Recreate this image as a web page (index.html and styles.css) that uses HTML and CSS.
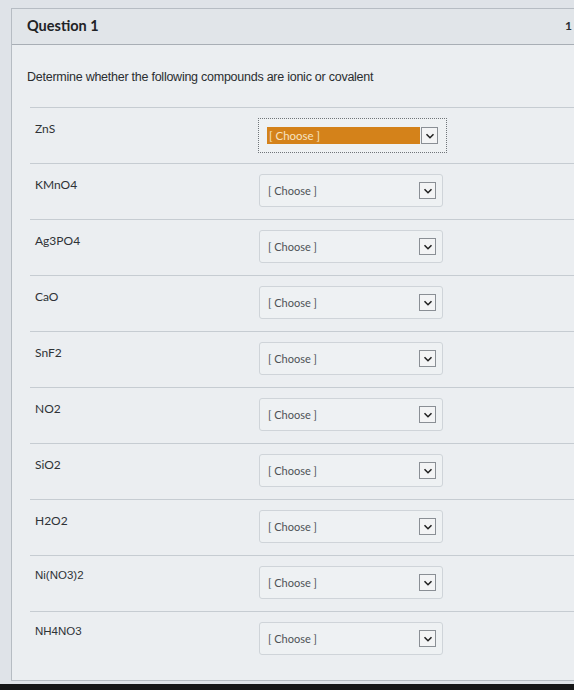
FILE: index.html
```html
<!DOCTYPE html>
<html>
<head>
<meta charset="utf-8">
<link rel="stylesheet" href="styles.css">
</head>
<body>
<div class="page">
  <div class="card">
    <div class="header">
      <span class="title">Question 1</span>
      <span class="pts">1</span>
    </div>
    <div class="content">
      <p class="prompt">Determine whether the following compounds are ionic or covalent</p>
      <div class="rows">
        <div class="row">
          <span class="label">ZnS</span>
          <div class="select focused">
            <span class="bar">[ Choose ]</span>
            <span class="chev"><svg viewBox="0 0 16 16" width="14" height="14"><path d="M4 6 L8 10 L12 6" fill="none" stroke="#222" stroke-width="1.8"/></svg></span>
          </div>
        </div>
        <div class="row">
          <span class="label">KMnO4</span>
          <div class="select"><span class="txt">[ Choose ]</span><span class="chev"><svg viewBox="0 0 16 16" width="14" height="14"><path d="M4 6 L8 10 L12 6" fill="none" stroke="#222" stroke-width="1.8"/></svg></span></div>
        </div>
        <div class="row">
          <span class="label">Ag3PO4</span>
          <div class="select"><span class="txt">[ Choose ]</span><span class="chev"><svg viewBox="0 0 16 16" width="14" height="14"><path d="M4 6 L8 10 L12 6" fill="none" stroke="#222" stroke-width="1.8"/></svg></span></div>
        </div>
        <div class="row">
          <span class="label">CaO</span>
          <div class="select"><span class="txt">[ Choose ]</span><span class="chev"><svg viewBox="0 0 16 16" width="14" height="14"><path d="M4 6 L8 10 L12 6" fill="none" stroke="#222" stroke-width="1.8"/></svg></span></div>
        </div>
        <div class="row">
          <span class="label">SnF2</span>
          <div class="select"><span class="txt">[ Choose ]</span><span class="chev"><svg viewBox="0 0 16 16" width="14" height="14"><path d="M4 6 L8 10 L12 6" fill="none" stroke="#222" stroke-width="1.8"/></svg></span></div>
        </div>
        <div class="row">
          <span class="label">NO2</span>
          <div class="select"><span class="txt">[ Choose ]</span><span class="chev"><svg viewBox="0 0 16 16" width="14" height="14"><path d="M4 6 L8 10 L12 6" fill="none" stroke="#222" stroke-width="1.8"/></svg></span></div>
        </div>
        <div class="row">
          <span class="label">SiO2</span>
          <div class="select"><span class="txt">[ Choose ]</span><span class="chev"><svg viewBox="0 0 16 16" width="14" height="14"><path d="M4 6 L8 10 L12 6" fill="none" stroke="#222" stroke-width="1.8"/></svg></span></div>
        </div>
        <div class="row">
          <span class="label">H2O2</span>
          <div class="select"><span class="txt">[ Choose ]</span><span class="chev"><svg viewBox="0 0 16 16" width="14" height="14"><path d="M4 6 L8 10 L12 6" fill="none" stroke="#222" stroke-width="1.8"/></svg></span></div>
        </div>
        <div class="row">
          <span class="label arial">Ni(NO3)2</span>
          <div class="select"><span class="txt">[ Choose ]</span><span class="chev"><svg viewBox="0 0 16 16" width="14" height="14"><path d="M4 6 L8 10 L12 6" fill="none" stroke="#222" stroke-width="1.8"/></svg></span></div>
        </div>
        <div class="row">
          <span class="label arial">NH4NO3</span>
          <div class="select"><span class="txt">[ Choose ]</span><span class="chev"><svg viewBox="0 0 16 16" width="14" height="14"><path d="M4 6 L8 10 L12 6" fill="none" stroke="#222" stroke-width="1.8"/></svg></span></div>
        </div>
      </div>
    </div>
  </div>
  <div class="bezel"></div>
</div>
</body>
</html>
```
FILE: styles.css
```css
html, body {
  margin: 0;
  padding: 0;
}
body {
  width: 574px;
  height: 690px;
  overflow: hidden;
  background: #dfe3e8;
  font-family: Lato, "Liberation Sans", sans-serif;
  color: #2b2f33;
}
.page {
  padding: 8px 0 0 11px;
  display: flex;
  flex-direction: column;
}
.card {
  border: 1px solid #b6bcc3;
  border-right: none;
  background: #ebeef1;
  padding-bottom: 13px;
}
.header {
  height: 36px;
  background: #e1e5e9;
  border-bottom: 1px solid #a8aeb5;
  display: flex;
  align-items: center;
  justify-content: space-between;
  padding: 0 0 3px 15px;
  box-sizing: border-box;
}
.title {
  font-weight: 700;
  font-size: 14.5px;
  color: #1f2326;
}
.pts {
  font-weight: 700;
  font-size: 12px;
  margin-right: 2px;
  color: #2a2e31;
}
.content {
  padding-left: 18px;
}
.prompt {
  margin: 0 0 0 -3px;
  height: 62px;
  display: flex;
  align-items: center;
  padding-top: 2px;
  box-sizing: border-box;
  font-family: "Liberation Sans", Arial, sans-serif;
  font-size: 12.5px;
  letter-spacing: -0.25px;
  color: #2a2d30;
}
.row {
  height: 56px;
  border-top: 1px solid #c6ccd2;
  box-sizing: border-box;
  display: flex;
  align-items: flex-start;
}
.label {
  width: 228px;
  box-sizing: border-box;
  padding-left: 5px;
  padding-top: 13px;
  font-size: 12px;
  color: #2e3236;
}
.label.arial {
  font-family: "Liberation Sans", Arial, sans-serif;
  font-size: 11.5px;
}
.select {
  margin-top: 10px;
  margin-left: 1px;
  width: 184px;
  height: 33px;
  box-sizing: border-box;
  border: 1px solid #cfd4d9;
  border-radius: 3px;
  background: #eef1f3;
  display: flex;
  align-items: center;
  justify-content: space-between;
  padding: 0 6px 0 8px;
}
.select.focused {
  margin-top: 10px;
  margin-left: 0;
  width: 189px;
  height: 35px;
  border: 1px dotted #6f7479;
  border-radius: 0;
  padding: 0 8px 0 8px;
  justify-content: flex-start;
}
.bar {
  width: 154px;
  height: 17px;
  background: #d4821a;
  color: #f7e2c2;
  font-size: 11.5px;
  line-height: 17px;
  padding-left: 2px;
  box-sizing: border-box;
}
.focused .chev {
  margin-left: 1px;
}
.txt {
  font-size: 11px;
  color: #4d5156;
}
.chev {
  width: 17px;
  height: 17px;
  box-sizing: border-box;
  border: 1px solid #8a8f95;
  background: #f3f4f5;
  display: flex;
  align-items: center;
  justify-content: center;
}
.bezel {
  margin-top: 3px;
  margin-left: -11px;
  height: 20px;
  background: #151617;
}
```
